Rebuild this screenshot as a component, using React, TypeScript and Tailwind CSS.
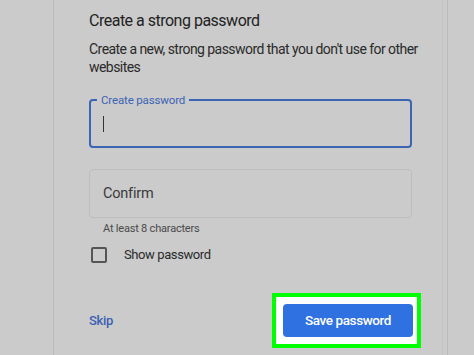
export default function App() {
  return (
    <div
      className="w-[474px] h-[355px] overflow-hidden bg-[#cbcbcb] flex"
      style={{ fontFamily: "Roboto, 'Liberation Sans', sans-serif" }}
    >
      <div className="ml-[53px] w-[395px] h-full border-x border-[#bababa] flex">
        <div className="w-[388px] h-full pl-[35px] pr-[30px]">
          <div className="w-[323px]">
            <h1 className="mt-[10px] text-[16px] leading-[22px] tracking-[-0.5px] text-[#222]">
              Create a strong password
            </h1>
            <p className="mt-[8px] w-[335px] text-[14px] leading-[18px] tracking-[-0.55px] text-[#2a2a2a]">
              Create a new, strong password that you don't use for other websites
            </p>

            {/* create password field */}
            <div className="relative mt-[23px] h-[49px] rounded-[4px] border-2 border-[#3b64b4]">
              <span className="absolute -top-[9px] left-[6px] px-[4px] bg-[#cbcbcb] text-[11.5px] leading-[16px] tracking-[-0.15px] text-[#3b64b4]">
                Create password
              </span>
              <div className="absolute left-[12px] top-[15px] w-px h-[16px] bg-[#333]" />
            </div>

            {/* confirm field */}
            <div className="mt-[21px] h-[49px] rounded-[4px] border border-[#bdbdbd] flex items-center pl-[13px]">
              <span className="text-[14.5px] tracking-[-0.2px] text-[#3a3a3a]">Confirm</span>
            </div>
            <div className="mt-[3px] pl-[14px] text-[11px] leading-[16px] tracking-[-0.2px] text-[#4a4a4a]">
              At least 8 characters
            </div>

            <div className="mt-[8px] h-[20px] flex items-center">
              <div className="ml-[2px] w-[16px] h-[16px] rounded-[2px] border-2 border-[#555]" />
              <span className="ml-[17px] text-[13px] leading-[20px] tracking-[-0.4px] text-[#2a2a2a]">Show password</span>
            </div>

            <div className="mt-[28px] flex items-center justify-between">
              <span className="text-[13px] font-medium tracking-[-0.3px] text-[#3b5fb4]">Skip</span>
              <div className="mr-[-9px] border-[4px] border-[#00ff00] bg-white p-[7px] pr-[4px]">
                <button className="block w-[130px] h-[33px] rounded-[4px] bg-[#2f71e0] text-white text-[13.5px] tracking-[-0.4px] font-medium">
                  Save password
                </button>
              </div>
            </div>
          </div>
        </div>
        <div className="w-px h-full bg-[#c2c2c2]" />
      </div>
    </div>
  );
}
